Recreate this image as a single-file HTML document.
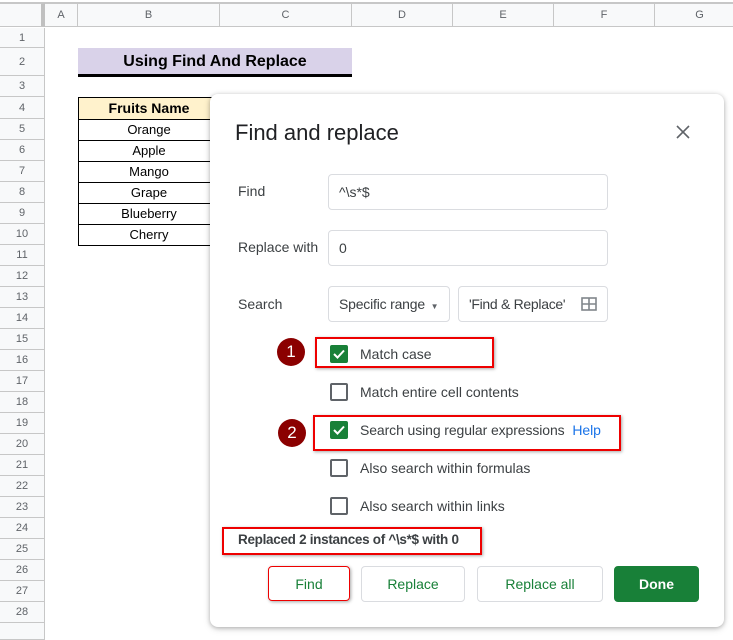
<!DOCTYPE html>
<html><head><style>
*{margin:0;padding:0;box-sizing:border-box}
body{width:733px;height:630px;overflow:hidden;background:#fff;font-family:"Liberation Sans",Arial,sans-serif;position:relative}
.a{position:absolute}
.ch{top:3px;height:24px;background:#f8f9fa;border-right:1px solid #c7c7c7;border-bottom:1px solid #c7c7c7;border-top:1px solid #c7c7c7;color:#5f6368;font-size:11px;text-align:center;line-height:23px}
.rh{left:0;width:45px;background:#f8f9fa;border-right:1px solid #c7c7c7;border-bottom:1px solid #c7c7c7;color:#5f6368;font-size:11px;text-align:center}
.cell{left:78px;width:142px;height:21px;border:1px solid #000;border-top:none;font-size:13px;text-align:center;line-height:20px}
.lbl{left:238px;font-size:14px;color:#3c4043}
.box{border:1px solid #dadce0;border-radius:4px;background:#fff;font-size:14px;color:#3c4043;padding-left:10px}
.cb{left:330px;width:18px;height:18px;border:2px solid #5f6368;border-radius:2px}
.cbc{background:#188038;border-color:#188038}
.opt{left:360px;font-size:14px;color:#3c4043}
.red{border:2px solid #e00;box-shadow:1px 1px 3px rgba(0,0,0,.35)}
.btn{top:566px;height:36px;border:1px solid #dadce0;border-radius:4px;color:#188038;font-size:14px;text-align:center;line-height:34px}
.num{width:28px;height:28px;border-radius:50%;background:#8b0000;color:#fff;font-size:17px;text-align:center;line-height:28px}
</style></head><body>
<div class="a" style="left:0;top:0;width:733px;height:3px;background:#fff;border-bottom:1px solid #c7c7c7"></div>
<div class="a ch" style="left:0;width:45px;border-right:4px solid #c0c0c0"></div>
<div class="a ch" style="left:45px;width:33px">A</div>
<div class="a ch" style="left:78px;width:142px">B</div>
<div class="a ch" style="left:220px;width:132px">C</div>
<div class="a ch" style="left:352px;width:101px">D</div>
<div class="a ch" style="left:453px;width:101px">E</div>
<div class="a ch" style="left:554px;width:101px">F</div>
<div class="a ch" style="left:655px;width:90px">G</div>
<div class="a rh" style="top:620px;height:20px"></div>
<div id="rows"></div>
<script>
var tops=[28,48,76,97,119],h=[20,28,21,22,21];var s='';
for(var i=0;i<28;i++){var t=i<5?tops[i]:119+(i-4)*21;var hh=i<5?h[i]:21;
s+='<div class="a rh" style="top:'+t+'px;height:'+hh+'px;line-height:'+hh+'px">'+(i+1)+'</div>';}
document.getElementById('rows').innerHTML=s;
</script>
<div class="a" style="left:78px;top:48px;width:274px;height:26px;background:#d9d2e9;font-weight:bold;font-size:16px;text-align:center;line-height:28px">Using Find And Replace</div>
<div class="a" style="left:78px;top:74px;width:274px;height:3px;background:#000"></div>
<div class="a" style="left:78px;top:97px;width:142px;height:23px;border:1px solid #000;background:#fff2cc;font-weight:bold;font-size:14px;text-align:center;line-height:21px">Fruits Name</div>
<div class="a cell" style="top:120px">Orange</div>
<div class="a cell" style="top:141px">Apple</div>
<div class="a cell" style="top:162px">Mango</div>
<div class="a cell" style="top:183px">Grape</div>
<div class="a cell" style="top:204px">Blueberry</div>
<div class="a cell" style="top:225px">Cherry</div>

<div class="a" style="left:210px;top:94px;width:514px;height:533px;background:#fff;border-radius:8px;box-shadow:0 1px 4px rgba(0,0,0,.25),0 2px 8px rgba(0,0,0,.12)"></div>
<div class="a" style="left:235px;top:120px;font-size:22px;color:#202124">Find and replace</div>
<svg class="a" style="left:676px;top:125px" width="14" height="14" viewBox="0 0 14 14"><path d="M1 1L13 13M13 1L1 13" stroke="#5f6368" stroke-width="1.6"/></svg>
<div class="a lbl" style="top:183px">Find</div>
<div class="a box" style="left:328px;top:174px;width:280px;height:36px;line-height:34px">^\s*$</div>
<div class="a lbl" style="top:239px">Replace with</div>
<div class="a box" style="left:328px;top:230px;width:280px;height:36px;line-height:34px">0</div>
<div class="a lbl" style="top:296px">Search</div>
<div class="a box" style="left:328px;top:286px;width:122px;height:36px;line-height:34px;letter-spacing:-0.2px">Specific range <span style="font-size:8px;color:#5f6368;margin-left:2px">▼</span></div>
<div class="a box" style="left:458px;top:286px;width:150px;height:36px;line-height:34px;letter-spacing:-0.3px">'Find &amp; Replace'</div>
<svg class="a" style="left:581px;top:297px" width="16" height="14" viewBox="0 0 16 14"><rect x="1" y="1" width="14" height="12" fill="none" stroke="#80868b" stroke-width="1.6"/><path d="M8 1V13M1 7H15" stroke="#80868b" stroke-width="1.6"/></svg>

<div class="a num" style="left:277px;top:338px">1</div>
<div class="a red" style="left:315px;top:337px;width:179px;height:31px"></div>
<div class="a cb cbc" style="left:330px;top:345px"></div>
<svg class="a" style="left:332px;top:347px" width="14" height="14" viewBox="0 0 14 14"><path d="M2 7L5.5 10.5L12 3.5" stroke="#fff" stroke-width="2" fill="none"/></svg>
<div class="a opt" style="top:346px">Match case</div>
<div class="a cb" style="top:383px"></div>
<div class="a opt" style="top:384px">Match entire cell contents</div>
<div class="a num" style="left:278px;top:419px">2</div>
<div class="a red" style="left:313px;top:415px;width:308px;height:36px"></div>
<div class="a cb cbc" style="left:330px;top:421px"></div>
<svg class="a" style="left:332px;top:423px" width="14" height="14" viewBox="0 0 14 14"><path d="M2 7L5.5 10.5L12 3.5" stroke="#fff" stroke-width="2" fill="none"/></svg>
<div class="a opt" style="top:422px;letter-spacing:-0.1px">Search using regular expressions <span style="color:#1a73e8;margin-left:4px">Help</span></div>
<div class="a cb" style="top:459px"></div>
<div class="a opt" style="top:460px">Also search within formulas</div>
<div class="a cb" style="top:497px"></div>
<div class="a opt" style="top:498px">Also search within links</div>
<div class="a red" style="left:222px;top:527px;width:260px;height:28px"></div>
<div class="a" style="left:238px;top:532px;font-size:13.5px;font-weight:bold;color:#3c4043;letter-spacing:-0.3px">Replaced 2 instances of ^\s*$ with 0</div>
<div class="a btn red" style="left:268px;top:566px;width:82px;height:35px;border-color:#e00">Find</div>
<div class="a btn" style="left:361px;width:104px">Replace</div>
<div class="a btn" style="left:477px;width:126px">Replace all</div>
<div class="a btn" style="left:614px;width:85px;background:#188038;border-color:#188038;color:#fff;font-weight:bold">Done</div>
</body></html>
